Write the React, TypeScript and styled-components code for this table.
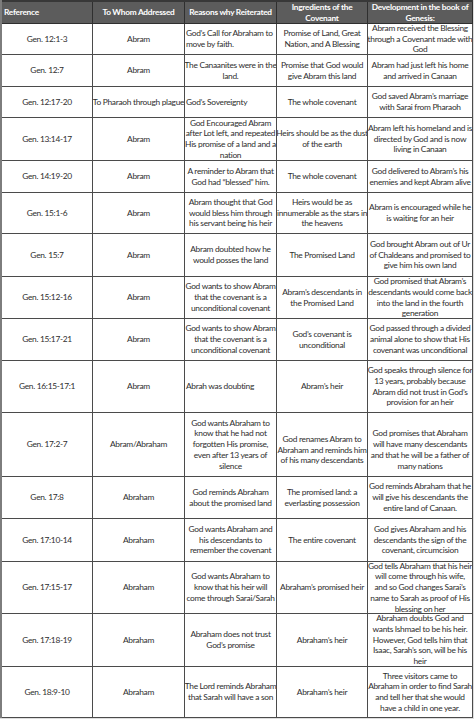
import styled, { createGlobalStyle } from 'styled-components'

type Cell = { text: string; left?: boolean }
type Row = { height: number; cells: (string | Cell)[] }

const rows: Row[] = [
  { height: 31, cells: ['Gen. 12:1-3', 'Abram', { text: 'God’s Call for Abraham to\nmove by faith.', left: true }, 'Promise of Land, Great\nNation, and A Blessing', 'Abram received the Blessing\nthrough a Covenant made with\nGod'] },
  { height: 32, cells: ['Gen. 12:7', 'Abram', 'The Canaanites were in the\nland.', 'Promise that God would\ngive Abram this land', 'Abram had just left his home\nand arrived in Canaan'] },
  { height: 31, cells: ['Gen. 12:17-20', 'To Pharaoh through plague', { text: 'God’s Sovereignty', left: true }, 'The whole covenant', 'God saved Abram’s marriage\nwith Sarai from Pharaoh'] },
  { height: 43, cells: ['Gen. 13:14-17', 'Abram', 'God Encouraged Abram\nafter Lot left, and repeated\nHis promise of a land and a\nnation', 'Heirs should be as the dust\nof the earth', 'Abram left his homeland and is\ndirected by God and is now\nliving in Canaan'] },
  { height: 32, cells: ['Gen. 14:19-20', 'Abram', 'A reminder to Abram that\nGod had “blessed” him.', 'The whole covenant', 'God delivered to Abram’s his\nenemies and kept Abram alive'] },
  { height: 41, cells: ['Gen. 15:1-6', 'Abram', 'Abram thought that God\nwould bless him through\nhis servant being his heir', 'Heirs would be as\ninnumerable as the stars in\nthe heavens', 'Abram is encouraged while he\nis waiting for an heir'] },
  { height: 43, cells: ['Gen. 15:7', 'Abram', 'Abram doubted how he\nwould posses the land', 'The Promised Land', 'God brought Abram out of Ur\nof Chaldeans and promised to\ngive him his own land'] },
  { height: 42, cells: ['Gen. 15:12-16', 'Abram', 'God wants to show Abram\nthat the covenant is a\nunconditional covenant', 'Abram’s descendants in\nthe Promised Land', 'God promised that Abram’s\ndescendants would come back\ninto the land in the fourth\ngeneration'] },
  { height: 42, cells: ['Gen. 15:17-21', 'Abram', 'God wants to show Abram\nthat the covenant is a\nunconditional covenant', 'God’s covenant is\nunconditional', 'God passed through a divided\nanimal alone to show that His\ncovenant was unconditional'] },
  { height: 52, cells: ['Gen. 16:15-17:1', 'Abram', { text: 'Abrah was doubting', left: true }, 'Abram’s heir', 'God speaks through silence for\n13 years, probably because\nAbram did not trust in God’s\nprovision for an heir'] },
  { height: 64, cells: ['Gen. 17:2-7', 'Abram/Abraham', 'God wants Abraham to\nknow that he had not\nforgotten His promise,\neven after 13 years of\nsilence', '\nGod renames Abram to\nAbraham and reminds him\nof his many descendants', '\nGod promises that Abraham\nwill have many descendants\nand that he will be a father of\nmany nations'] },
  { height: 42, cells: ['Gen. 17:8', 'Abraham', 'God reminds Abraham\nabout the promised land', 'The promised land: a\neverlasting possession', 'God reminds Abraham that he\nwill give his descendants the\nentire land of Canaan.'] },
  { height: 43, cells: ['Gen. 17:10-14', 'Abraham', 'God wants Abraham and\nhis descendants to\nremember the covenant', 'The entire covenant', 'God gives Abraham and his\ndescendants the sign of the\ncovenant, circumcision'] },
  { height: 52, cells: ['Gen. 17:15-17', 'Abraham', 'God wants Abraham to\nknow that his heir will\ncome through Sarai/Sarah', 'Abraham’s promised heir', 'God tells Abraham that his heir\nwill come through his wife,\nand so God changes Sarai’s\nname to Sarah as proof of His\nblessing on her'] },
  { height: 53, cells: ['Gen. 17:18-19', 'Abraham', 'Abraham does not trust\nGod’s promise', 'Abraham’s heir', 'Abraham doubts God and\nwants Ishmael to be his heir.\nHowever, God tells him that\nIsaac, Sarah’s son, will be his\nheir'] },
  { height: 51, cells: ['Gen. 18:9-10', 'Abraham', 'The Lord reminds Abraham\nthat Sarah will have a son', 'Abraham’s heir', 'Three visitors came to\nAbraham in order to find Sarah\nand tell her that she would\nhave a child in one year.'] },
]

const headers: Cell[] = [
  { text: 'Reference', left: true },
  { text: 'To Whom Addressed' },
  { text: 'Reasons why Reiterated' },
  { text: 'Ingredients of the\nCovenant' },
  { text: 'Development in the book of\nGenesis:' },
]

const GlobalStyle = createGlobalStyle`
  body {
    margin: 0;
    background: #dedede;
    font-family: Lato, "Liberation Sans", sans-serif;
  }
`

const Table = styled.div`
  width: 473px;
  border-left: 2px solid #7d7d7d;
  box-sizing: border-box;
  background: #fff;
`

const Grid = styled.div<{ $height: number }>`
  display: grid;
  grid-template-columns: 91px 92px 92px 91px 105px;
  height: ${p => p.$height}px;
`

const HeaderRow = styled(Grid)`
  background: #5c5c5c;
  border-top: 2px solid #383838;
  box-sizing: border-box;
`

const HeaderCell = styled.div<{ $left?: boolean }>`
  display: flex;
  align-items: center;
  justify-content: ${p => (p.$left ? 'flex-start' : 'center')};
  padding-left: ${p => (p.$left ? '2px' : '0')};
  border-right: 1px solid #2f2f2f;
  border-bottom: 1px solid #2f2f2f;
  color: #fff;
  font-weight: 700;
  font-size: 8.3px;
  letter-spacing: -0.25px;
  line-height: 10.7px;
  text-align: center;
  white-space: pre;
`

const BodyCell = styled.div<{ $left?: boolean }>`
  display: flex;
  align-items: center;
  justify-content: ${p => (p.$left ? 'flex-start' : 'center')};
  padding-left: ${p => (p.$left ? '1px' : '0')};
  border-right: 1px solid #4b4b4b;
  border-bottom: 1px solid #4b4b4b;
  color: #2e2e2e;
  font-size: 8.4px;
  letter-spacing: -0.3px;
  line-height: 10.7px;
  text-align: ${p => (p.$left ? 'left' : 'center')};
  white-space: pre;
  overflow: hidden;
`

export default function App() {
  return (
    <>
      <GlobalStyle />
      <Table>
        <HeaderRow $height={24}>
          {headers.map((h, i) => (
            <HeaderCell key={i} $left={h.left}>{h.text}</HeaderCell>
          ))}
        </HeaderRow>
        {rows.map((row, r) => (
          <Grid key={r} $height={row.height}>
            {row.cells.map((c, i) => {
              const cell = typeof c === 'string' ? { text: c } : c
              return (
                <BodyCell key={i} $left={cell.left}>{cell.text}</BodyCell>
              )
            })}
          </Grid>
        ))}
      </Table>
    </>
  )
}
